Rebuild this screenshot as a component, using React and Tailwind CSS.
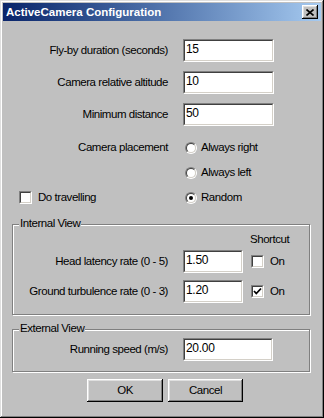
import React from 'react';

const font = "font-['Liberation_Sans',Arial,sans-serif] text-[11.5px] tracking-[-0.45px] leading-[15px] text-black whitespace-nowrap";

function Field({ value, width }) {
  return (
    <div className={`h-[23px] ${width} border border-t-[#808080] border-l-[#808080] border-r-white border-b-white`}>
      <div className="h-full bg-white border border-t-[#404040] border-l-[#404040] border-r-[#d4d0c8] border-b-[#d4d0c8] pl-[1px] pt-[1px] text-[12px] tracking-[-0.3px]">
        {value}
      </div>
    </div>
  );
}

function Radio({ checked }) {
  return (
    <div className="w-[12px] h-[12px] rounded-full border border-t-[#808080] border-l-[#808080] border-r-white border-b-white">
      <div className="w-full h-full rounded-full bg-white border border-t-[#404040] border-l-[#404040] border-r-[#d4d0c8] border-b-[#d4d0c8] flex items-center justify-center">
        {checked && <div className="w-[4px] h-[4px] rounded-full bg-black" />}
      </div>
    </div>
  );
}

function Check({ checked }) {
  return (
    <div className="w-[13px] h-[13px] border border-t-[#808080] border-l-[#808080] border-r-white border-b-white">
      <div className="w-full h-full bg-white border border-t-[#404040] border-l-[#404040] border-r-[#d4d0c8] border-b-[#d4d0c8] flex items-center justify-center">
        {checked && (
          <svg width="9" height="9" viewBox="0 0 9 9">
            <polyline points="1,4 3.3,6.5 8,1.5" fill="none" stroke="#000" strokeWidth="1.8" />
          </svg>
        )}
      </div>
    </div>
  );
}

function Button({ children, width }) {
  return (
    <div className={`h-[23px] ${width} flex items-center justify-center bg-[#c0c0c0] shadow-[inset_-1px_-1px_0_#000,inset_1px_1px_0_#fff,inset_-2px_-2px_0_#808080,inset_2px_2px_0_#dfdfdf]`}>
      {children}
    </div>
  );
}

function Group({ title, className, children }) {
  return (
    <div className={`relative ml-[9px] w-[298px] border border-[#808080] shadow-[inset_1px_1px_0_#fff,1px_1px_0_#fff] ${className}`}>
      <span className="absolute left-[6px] top-[-9px] px-[1px] bg-[#c0c0c0]">{title}</span>
      {children}
    </div>
  );
}

export default function App() {
  return (
    <div className={`w-[324px] h-[418px] bg-[#c0c0c0] p-[3px] flex flex-col shadow-[inset_-1px_-1px_0_#000,inset_1px_1px_0_#dfdfdf,inset_-2px_-2px_0_#808080,inset_2px_2px_0_#fff] ${font}`}>
      {/* Title bar */}
      <div className="h-[18px] shrink-0 flex items-center justify-between pl-[3px] pr-[3px] bg-linear-to-r from-[#0a246a] to-[#a6caf0]">
        <span className="font-['Liberation_Sans',Arial,sans-serif] font-bold text-[11.5px] tracking-normal text-white leading-[14px]">
          ActiveCamera Configuration
        </span>
        <div className="w-[16px] h-[14px] flex items-center justify-center bg-[#c0c0c0] shadow-[inset_-1px_-1px_0_#000,inset_1px_1px_0_#fff,inset_-2px_-2px_0_#808080,inset_2px_2px_0_#dfdfdf]">
          <svg width="8" height="7" viewBox="0 0 8 7">
            <path d="M0.5 0.5 L7.5 6.5 M7.5 0.5 L0.5 6.5" stroke="#000" strokeWidth="1.6" />
          </svg>
        </div>
      </div>

      {/* Main fields */}
      <div className="flex flex-col gap-[9px] pt-[18px]">
        <div className="flex items-center">
          <div className="w-[165px] text-right">Fly-by duration (seconds)</div>
          <div className="ml-[15px]"><Field value="15" width="w-[91px]" /></div>
        </div>
        <div className="flex items-center">
          <div className="w-[165px] text-right">Camera relative altitude</div>
          <div className="ml-[15px]"><Field value="10" width="w-[91px]" /></div>
        </div>
        <div className="flex items-center">
          <div className="w-[165px] text-right">Minimum distance</div>
          <div className="ml-[15px]"><Field value="50" width="w-[91px]" /></div>
        </div>
      </div>

      {/* Camera placement */}
      <div className="flex flex-col mt-[9px]">
        <div className="flex items-center h-[25px]">
          <div className="w-[165px] text-right">Camera placement</div>
          <div className="ml-[17px] flex items-center gap-[4px]"><Radio /><span>Always right</span></div>
        </div>
        <div className="flex items-center h-[25px]">
          <div className="w-[165px]" />
          <div className="ml-[17px] flex items-center gap-[4px]"><Radio /><span>Always left</span></div>
        </div>
        <div className="flex items-center h-[25px]">
          <div className="w-[165px] pl-[16px] flex items-center gap-[6px]"><Check /><span>Do travelling</span></div>
          <div className="ml-[17px] flex items-center gap-[4px]"><Radio checked /><span>Random</span></div>
        </div>
      </div>

      {/* Internal View */}
      <Group title="Internal View" className="mt-[14px] pt-[7px] pb-[11px]">
        <div className="pl-[237px]">Shortcut</div>
        <div className="flex items-center mt-[3px]">
          <div className="w-[155px] text-right">Head latency rate (0 - 5)</div>
          <div className="ml-[15px]"><Field value="1.50" width="w-[60px]" /></div>
          <div className="ml-[8px] flex items-center gap-[6px]"><Check /><span>On</span></div>
        </div>
        <div className="flex items-center mt-[7px]">
          <div className="w-[155px] text-right">Ground turbulence rate (0 - 3)</div>
          <div className="ml-[15px]"><Field value="1.20" width="w-[60px]" /></div>
          <div className="ml-[8px] flex items-center gap-[6px]"><Check checked /><span>On</span></div>
        </div>
      </Group>

      {/* External View */}
      <Group title="External View" className="mt-[14px] pt-[8px] pb-[10px]">
        <div className="flex items-center">
          <div className="w-[155px] text-right">Running speed (m/s)</div>
          <div className="ml-[15px]"><Field value="20.00" width="w-[90px]" /></div>
        </div>
      </Group>

      {/* Buttons */}
      <div className="flex gap-[5px] ml-[84px] mt-[7px]">
        <Button width="w-[76px]">OK</Button>
        <Button width="w-[75px]">Cancel</Button>
      </div>
    </div>
  );
}
